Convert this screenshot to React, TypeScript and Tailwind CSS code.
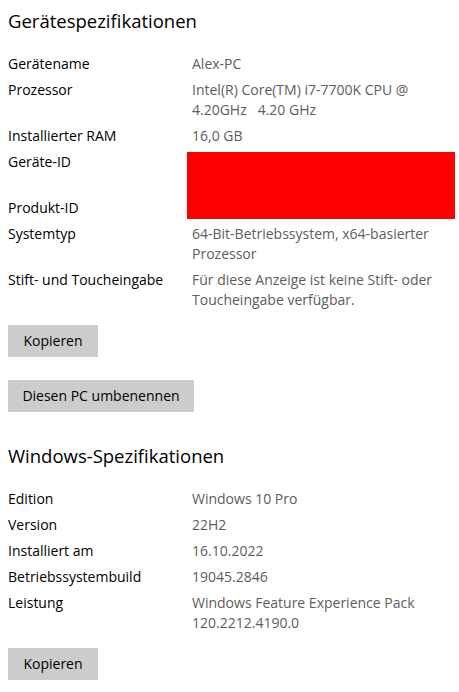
import React from "react";

function Row({ label, children }: { label: string; children: React.ReactNode }) {
  return (
    <div className="flex">
      <div className="w-[184px] shrink-0 text-black">{label}</div>
      <div className="text-[#5d5d5d] whitespace-pre">{children}</div>
    </div>
  );
}

function Btn({ children, w }: { children: React.ReactNode; w: string }) {
  return (
    <div className={"h-8 bg-[#cccccc] flex items-center justify-center text-black " + w}>{children}</div>
  );
}

export default function App() {
  return (
    <div className="w-[459px] h-[692px] bg-white overflow-hidden px-2 text-[14px] leading-5 font-['Open_Sans',sans-serif]">
      <h1 className="mt-[7px] text-[18.5px] leading-[28px] text-black">Gerätespezifikationen</h1>
      <div className="mt-[19px] flex flex-col gap-[6px] relative">
        <Row label="Gerätename">Alex-PC</Row>
        <Row label="Prozessor">{"Intel(R) Core(TM) i7-7700K CPU @\n4.20GHz   4.20 GHz"}</Row>
        <Row label="Installierter RAM">16,0 GB</Row>
        <Row label="Geräte-ID">{"\n "}</Row>
        <Row label="Produkt-ID">{" "}</Row>
        <Row label="Systemtyp">{"64-Bit-Betriebssystem, x64-basierter\nProzessor"}</Row>
        <Row label="Stift- und Toucheingabe">{"Für diese Anzeige ist keine Stift- oder\nToucheingabe verfügbar."}</Row>
        <div className="absolute left-[179px] top-[98px] w-[268px] h-[67px] bg-[#ff0000]" />
      </div>
      <div className="mt-[15px] flex flex-col items-start gap-[23px]">
        <Btn w="w-[90px]">Kopieren</Btn>
        <Btn w="w-[186px]">Diesen PC umbenennen</Btn>
      </div>
      <h2 className="mt-[30px] text-[18.5px] leading-[28px] text-black">Windows-Spezifikationen</h2>
      <div className="mt-[19px] flex flex-col gap-[6px]">
        <Row label="Edition">Windows 10 Pro</Row>
        <Row label="Version">22H2</Row>
        <Row label="Installiert am">16.10.2022</Row>
        <Row label="Betriebssystembuild">19045.2846</Row>
        <Row label="Leistung">{"Windows Feature Experience Pack\n120.2212.4190.0"}</Row>
      </div>
      <div className="mt-[15px]">
        <Btn w="w-[90px]">Kopieren</Btn>
      </div>
    </div>
  );
}
